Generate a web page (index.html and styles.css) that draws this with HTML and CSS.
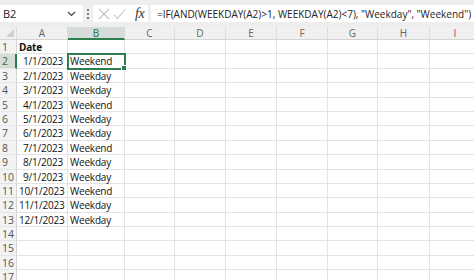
FILE: index.html
```html
<!DOCTYPE html>
<html>
<head>
<meta charset="utf-8">
<link rel="stylesheet" href="styles.css">
</head>
<body>
<div class="fbar">
  <div class="namebox"><span class="ref">B2</span>
    <svg class="chev" width="9" height="6" viewBox="0 0 9 6"><path d="M1 1 L4.5 4.5 L8 1" fill="none" stroke="#444" stroke-width="1.2"/></svg>
  </div>
  <div class="dots"><span></span><span></span><span></span></div>
  <div class="fnbox">
    <svg width="12" height="12" viewBox="0 0 12 12"><path d="M1 1 L11 11 M11 1 L1 11" stroke="#c4c4c4" stroke-width="1.1"/></svg>
    <svg width="13" height="12" viewBox="0 0 13 12"><path d="M1 6.5 L4.5 10.5 L12 1.5" fill="none" stroke="#c4c4c4" stroke-width="1.1"/></svg>
    <span class="fx">fx</span>
  </div>
  <div class="formula">=IF(AND(WEEKDAY(A2)&gt;1, WEEKDAY(A2)&lt;7), "Weekday", "Weekend")</div>
</div>
<div class="sheet">
  <div class="corner"><span class="tri"></span></div>
  <div class="ch">A</div><div class="ch sel">B</div><div class="ch">C</div><div class="ch">D</div><div class="ch">E</div><div class="ch">F</div><div class="ch">G</div><div class="ch">H</div><div class="ch">I</div>

  <div class="rh">1</div><div class="c b">Date</div><div class="c"></div><div class="c"></div><div class="c"></div><div class="c"></div><div class="c"></div><div class="c"></div><div class="c"></div><div class="c"></div>
  <div class="rh sel">2</div><div class="c r">1/1/2023</div><div class="c active">Weekend</div><div class="c"></div><div class="c"></div><div class="c"></div><div class="c"></div><div class="c"></div><div class="c"></div><div class="c"></div>
  <div class="rh">3</div><div class="c r">2/1/2023</div><div class="c">Weekday</div><div class="c"></div><div class="c"></div><div class="c"></div><div class="c"></div><div class="c"></div><div class="c"></div><div class="c"></div>
  <div class="rh">4</div><div class="c r">3/1/2023</div><div class="c">Weekday</div><div class="c"></div><div class="c"></div><div class="c"></div><div class="c"></div><div class="c"></div><div class="c"></div><div class="c"></div>
  <div class="rh">5</div><div class="c r">4/1/2023</div><div class="c">Weekend</div><div class="c"></div><div class="c"></div><div class="c"></div><div class="c"></div><div class="c"></div><div class="c"></div><div class="c"></div>
  <div class="rh">6</div><div class="c r">5/1/2023</div><div class="c">Weekday</div><div class="c"></div><div class="c"></div><div class="c"></div><div class="c"></div><div class="c"></div><div class="c"></div><div class="c"></div>
  <div class="rh">7</div><div class="c r">6/1/2023</div><div class="c">Weekday</div><div class="c"></div><div class="c"></div><div class="c"></div><div class="c"></div><div class="c"></div><div class="c"></div><div class="c"></div>
  <div class="rh">8</div><div class="c r">7/1/2023</div><div class="c">Weekend</div><div class="c"></div><div class="c"></div><div class="c"></div><div class="c"></div><div class="c"></div><div class="c"></div><div class="c"></div>
  <div class="rh">9</div><div class="c r">8/1/2023</div><div class="c">Weekday</div><div class="c"></div><div class="c"></div><div class="c"></div><div class="c"></div><div class="c"></div><div class="c"></div><div class="c"></div>
  <div class="rh">10</div><div class="c r">9/1/2023</div><div class="c">Weekday</div><div class="c"></div><div class="c"></div><div class="c"></div><div class="c"></div><div class="c"></div><div class="c"></div><div class="c"></div>
  <div class="rh">11</div><div class="c r">10/1/2023</div><div class="c">Weekend</div><div class="c"></div><div class="c"></div><div class="c"></div><div class="c"></div><div class="c"></div><div class="c"></div><div class="c"></div>
  <div class="rh">12</div><div class="c r">11/1/2023</div><div class="c">Weekday</div><div class="c"></div><div class="c"></div><div class="c"></div><div class="c"></div><div class="c"></div><div class="c"></div><div class="c"></div>
  <div class="rh">13</div><div class="c r">12/1/2023</div><div class="c">Weekday</div><div class="c"></div><div class="c"></div><div class="c"></div><div class="c"></div><div class="c"></div><div class="c"></div><div class="c"></div>
  <div class="rh">14</div><div class="c"></div><div class="c"></div><div class="c"></div><div class="c"></div><div class="c"></div><div class="c"></div><div class="c"></div><div class="c"></div><div class="c"></div>
  <div class="rh">15</div><div class="c"></div><div class="c"></div><div class="c"></div><div class="c"></div><div class="c"></div><div class="c"></div><div class="c"></div><div class="c"></div><div class="c"></div>
  <div class="rh">16</div><div class="c"></div><div class="c"></div><div class="c"></div><div class="c"></div><div class="c"></div><div class="c"></div><div class="c"></div><div class="c"></div><div class="c"></div>
  <div class="rh">17</div><div class="c"></div><div class="c"></div><div class="c"></div><div class="c"></div><div class="c"></div><div class="c"></div><div class="c"></div><div class="c"></div><div class="c"></div>
</div>
</body>
</html>
```
FILE: styles.css
```css
html, body {
  margin: 0;
  padding: 0;
  background: #ffffff;
  width: 474px;
  height: 280px;
  overflow: hidden;
  font-family: "Open Sans", "Noto Sans", sans-serif;
}
.fbar {
  height: 27px;
  box-sizing: border-box;
  background: #eeeeee;
  padding: 5px 0 5px 0;
  display: flex;
  align-items: stretch;
}
.namebox {
  width: 83px;
  background: #ffffff;
  display: flex;
  align-items: center;
  justify-content: space-between;
  padding: 0 7px 0 3px;
  box-sizing: border-box;
  font-size: 11px;
  color: #222;
}
.dots {
  width: 10px;
  display: flex;
  flex-direction: column;
  align-items: center;
  justify-content: center;
  gap: 2px;
}
.dots span {
  width: 2px;
  height: 2px;
  background: #555;
  border-radius: 1px;
}
.fnbox {
  width: 55px;
  background: #ffffff;
  display: flex;
  align-items: center;
  padding-left: 5px;
  gap: 3px;
  box-sizing: border-box;
}
.fx {
  font-family: "Liberation Serif", "DejaVu Serif", serif;
  font-style: italic;
  font-size: 14px;
  color: #333;
  margin-left: 6px;
  letter-spacing: -0.5px;
}
.formula {
  flex: 1;
  margin-left: 3px;
  background: #ffffff;
  font-size: 10px;
  color: #222;
  display: flex;
  align-items: center;
  padding-left: 6px;
  white-space: nowrap;
  overflow: hidden;
}
.sheet {
  display: grid;
  grid-template-columns: 17px 51px 57px 50px 51px 51px 51px 50px 52px 51px;
  grid-template-rows: 13px;
  grid-auto-rows: 14.4px;
  font-size: 10px;
  letter-spacing: -0.2px;
}
.corner {
  background: #f0f0f0;
  border-right: 1px solid #dcdcdc;
  border-bottom: 1px solid #d4d4d4;
  position: relative;
  box-sizing: border-box;
}
.tri {
  position: absolute;
  right: 2px;
  bottom: 2px;
  width: 0;
  height: 0;
  border-left: 8px solid transparent;
  border-bottom: 8px solid #cfcfcf;
}
.ch {
  background: #f0f0f0;
  border-right: 1px solid #dcdcdc;
  border-bottom: 1px solid #d4d4d4;
  box-sizing: border-box;
  font-size: 10px;
  letter-spacing: 0;
  color: #666;
  text-align: center;
  line-height: 12px;
}
.ch.sel {
  background: #d6dcd8;
  color: #2c6e49;
  border-bottom: 2px solid #2e7d4f;
}
.rh {
  background: #f3f3f3;
  border-right: 1px solid #d4d4d4;
  border-bottom: 1px solid #e6e6e6;
  box-sizing: border-box;
  font-size: 10.5px;
  letter-spacing: 0;
  color: #555;
  padding-left: 2px;
  line-height: 14px;
}
.rh.sel {
  background: #d6dcd8;
  color: #2c6e49;
  border-right: 2px solid #2e7d4f;
}
.c {
  border-right: 1px solid #e3e3e3;
  border-bottom: 1px solid #e3e3e3;
  box-sizing: border-box;
  line-height: 14px;
  padding: 0 2px;
  color: #111;
  white-space: nowrap;
}
.c.r { text-align: right; padding-right: 4px; }
.c.b { font-weight: bold; }
.c.active {
  position: relative;
  outline: 2px solid #2e7d4f;
  outline-offset: -1px;
  z-index: 1;
}
.c.active::after {
  content: "";
  position: absolute;
  right: -3px;
  bottom: -3px;
  width: 4px;
  height: 4px;
  background: #2e7d4f;
  border: 1px solid #fff;
}
```
